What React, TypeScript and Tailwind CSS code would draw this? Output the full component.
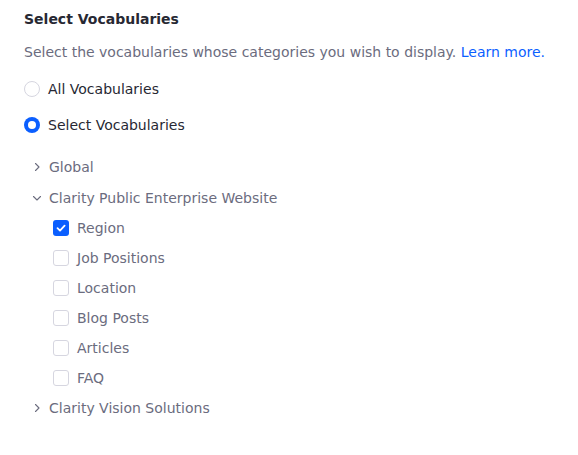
import React, { useState } from 'react';

const font = { fontFamily: '"DejaVu Sans", sans-serif' };

const Chevron = ({ open }: { open: boolean }) => (
  <svg width="12" height="12" viewBox="0 0 12 12" fill="none" className="text-[#6b6c7e]">
    {open ? (
      <path d="M2.5 4.5 L6 8 L9.5 4.5" stroke="currentColor" strokeWidth="1.1" strokeLinecap="round" strokeLinejoin="round" />
    ) : (
      <path d="M4.5 2.5 L8 6 L4.5 9.5" stroke="currentColor" strokeWidth="1.1" strokeLinecap="round" strokeLinejoin="round" />
    )}
  </svg>
);

const Checkbox = ({ checked }: { checked: boolean }) =>
  checked ? (
    <span className="flex h-4 w-4 items-center justify-center rounded-[3px] bg-[#0b5fff]">
      <svg width="12" height="12" viewBox="0 0 12 12" fill="none">
        <path d="M2.5 6.2 L5 8.6 L9.6 3.6" stroke="white" strokeWidth="1.8" strokeLinecap="round" strokeLinejoin="round" />
      </svg>
    </span>
  ) : (
    <span className="block h-4 w-4 rounded-[3px] border border-[#d6d6e0] bg-white" />
  );

const Radio = ({ checked }: { checked: boolean }) =>
  checked ? (
    <span className="flex h-4 w-4 items-center justify-center rounded-full bg-[#0b5fff]">
      <span className="block h-2 w-2 rounded-full bg-white" />
    </span>
  ) : (
    <span className="block h-4 w-4 rounded-full border border-[#d6d6e0] bg-white" />
  );

const App: React.FC = () => {
  const [mode] = useState<'all' | 'select'>('select');
  const items = [
    { label: 'Region', checked: true },
    { label: 'Job Positions', checked: false },
    { label: 'Location', checked: false },
    { label: 'Blog Posts', checked: false },
    { label: 'Articles', checked: false },
    { label: 'FAQ', checked: false },
  ];

  return (
    <div className="min-h-screen w-[578px] bg-white px-6 pt-[9px] text-sm" style={font}>
      <h3 className="h-5 text-[14px] font-bold leading-5 text-[#272833]">Select Vocabularies</h3>

      <p className="mt-[13px] h-5 leading-5 text-[#6b6c7e]">
        Select the vocabularies whose categories you wish to display.{' '}
        <a href="#" className="text-[#0b5fff]">Learn more.</a>
      </p>

      {/* radio group */}
      <div className="mt-[17px] flex flex-col gap-4">
        <label className="flex h-5 items-center gap-2 text-[#272833]">
          <Radio checked={mode === 'all'} />
          All Vocabularies
        </label>
        <label className="flex h-5 items-center gap-2 text-[#272833]">
          <Radio checked={mode === 'select'} />
          Select Vocabularies
        </label>
      </div>

      {/* tree */}
      <div className="mt-[17px] flex flex-col text-[#6b6c7e]">
        <div className="flex h-[30px] items-center gap-[6px] pl-[7px]">
          <Chevron open={false} />
          Global
        </div>
        <div className="flex h-[31px] items-center gap-[6px] pl-[7px]">
          <Chevron open />
          Clarity Public Enterprise Website
        </div>
        {items.map((it) => (
          <div key={it.label} className="flex h-[30px] items-center gap-2 pl-[29px]">
            <Checkbox checked={it.checked} />
            {it.label}
          </div>
        ))}
        <div className="flex h-[29px] items-center gap-[6px] pl-[7px]">
          <Chevron open={false} />
          Clarity Vision Solutions
        </div>
      </div>
    </div>
  );
};

export default App;
